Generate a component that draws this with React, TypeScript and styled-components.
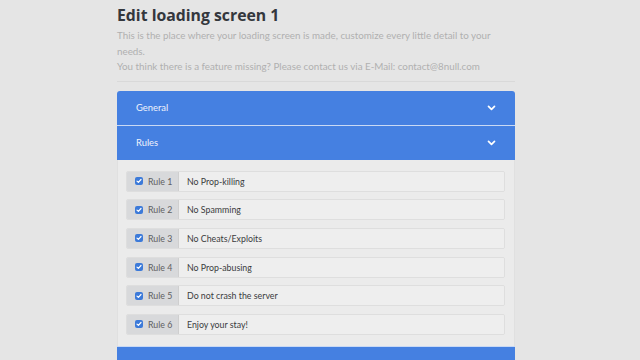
import React from "react";
import { styled, createGlobalStyle } from "styled-components";

const GlobalStyle = createGlobalStyle`
  html, body {
    margin: 0;
    padding: 0;
    background: #e5e5e5;
    font-family: Lato, "Open Sans", "Liberation Sans", sans-serif;
    overflow: hidden;
  }
`;

const rules = [
  "No Prop-killing",
  "No Spamming",
  "No Cheats/Exploits",
  "No Prop-abusing",
  "Do not crash the server",
  "Enjoy your stay!",
];

const Chevron: React.FC = () => (
  <svg width="9" height="6" viewBox="0 0 9 6">
    <path d="M1.5 1.3 L4.5 4.3 L7.5 1.3" fill="none" stroke="#fff" strokeWidth="1.7" strokeLinecap="round" strokeLinejoin="round" />
  </svg>
);

const Check: React.FC = () => (
  <CheckBox>
    <svg width="6" height="6" viewBox="0 0 6 6">
      <path d="M1 3.1 L2.4 4.4 L5 1.5" fill="none" stroke="#fff" strokeWidth="1.2" strokeLinecap="round" strokeLinejoin="round" />
    </svg>
  </CheckBox>
);

const App: React.FC = () => {
  return (
    <>
      <GlobalStyle />
      <Page>
        <Title>Edit loading screen 1</Title>
        <Intro>
          This is the place where your loading screen is made, customize every little detail to your needs.
          <br />
          You think there is a feature missing? Please contact us via E-Mail: contact@8null.com
        </Intro>
        <Divider />
        <Accordion>
          <Header $first>
            <span>General</span>
            <Chevron />
          </Header>
          <Header>
            <span>Rules</span>
            <Chevron />
          </Header>
          <Body>
            {rules.map((rule, i) => (
              <RuleRow key={i}>
                <RuleLabel>
                  <Check />
                  Rule {i + 1}
                </RuleLabel>
                <RuleInput>{rule}</RuleInput>
              </RuleRow>
            ))}
          </Body>
          <Header>
            <span>Loading</span>
            <Chevron />
          </Header>
        </Accordion>
      </Page>
    </>
  );
};

export default App;

const Page = styled.div`
  width: 398px;
  padding: 5px 0 0 117px;
`;

const Title = styled.h1`
  margin: 0;
  font-family: "Open Sans", sans-serif;
  font-size: 15.8px;
  font-weight: 700;
  line-height: 20px;
  color: #34373d;
`;

const Intro = styled.p`
  max-width: 390px;
  margin: 3px 0 0;
  font-size: 9.8px;
  line-height: 15.5px;
  color: #b0b0b0;
`;

const Divider = styled.div`
  height: 1px;
  background: #d9d9d9;
  margin: 6px 0 9px;
`;

const Accordion = styled.div`
  display: flex;
  flex-direction: column;
`;

const Header = styled.div<{ $first?: boolean }>`
  height: 34px;
  display: flex;
  align-items: center;
  justify-content: space-between;
  padding: 0 19px;
  background: #4580e1;
  color: #eef3fc;
  font-size: 9.4px;
  border-radius: ${(p) => (p.$first ? "3px 3px 0 0" : "0")};
  margin-top: ${(p) => (p.$first ? "0" : "1px")};
  box-shadow: ${(p) => (p.$first ? "none" : "0 -1px 0 #c9d9f4")};
`;

const Body = styled.div`
  display: flex;
  flex-direction: column;
  gap: 7.7px;
  padding: 11px 9px 11px 8px;
  background: #ebebeb;
  border-left: 1px solid #e0e0e0;
  border-right: 1px solid #e0e0e0;
`;

const RuleRow = styled.div`
  display: flex;
  height: 21px;
  box-sizing: border-box;
  border: 1px solid #dedede;
  border-radius: 2px;
  overflow: hidden;
`;

const RuleLabel = styled.div`
  width: 52px;
  flex-shrink: 0;
  display: flex;
  align-items: center;
  gap: 5px;
  padding-left: 8px;
  box-sizing: border-box;
  background: #d8d9db;
  border-right: 1px solid #cfcfcf;
  color: #5f6062;
  font-size: 8.8px;
`;

const CheckBox = styled.span`
  width: 8px;
  height: 8px;
  border-radius: 2px;
  background: #3c7ad9;
  display: flex;
  align-items: center;
  justify-content: center;
`;

const RuleInput = styled.div`
  flex: 1;
  display: flex;
  align-items: center;
  padding-left: 8px;
  background: #eeeeee;
  color: #3a3b3d;
  font-size: 8.8px;
`;
